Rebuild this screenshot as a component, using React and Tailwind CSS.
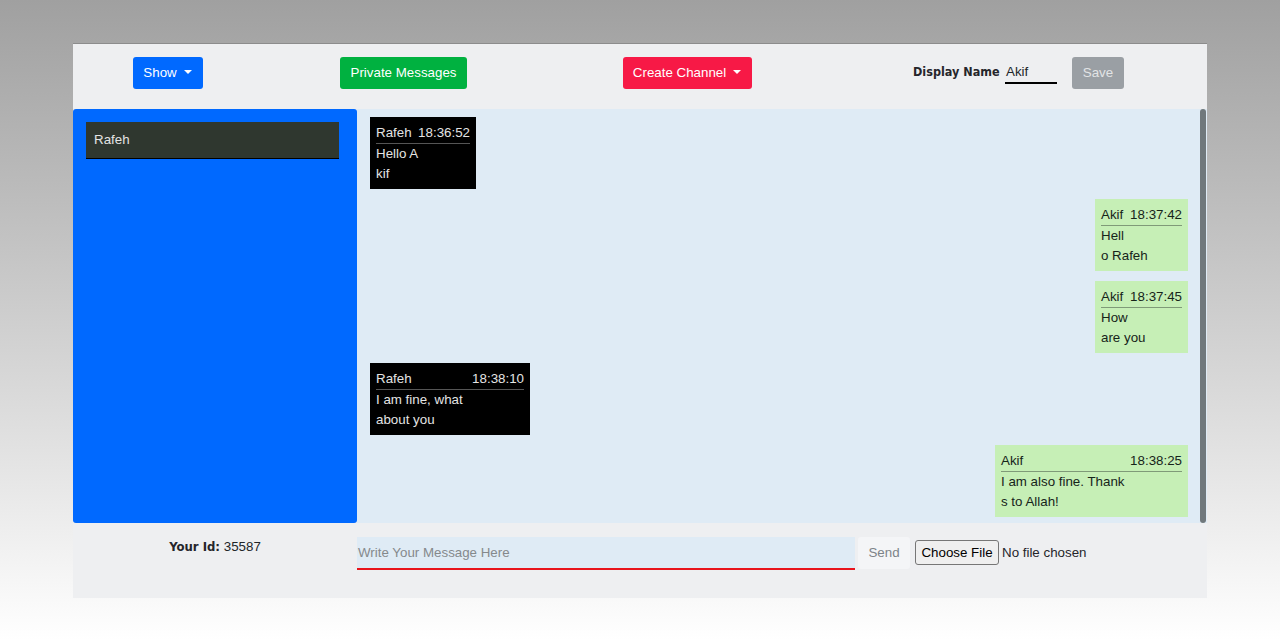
import React from 'react';

const messages = [
    { id: 1, mine: false, name: 'Rafeh', time: '18:36:52', lines: ['Hello A', 'kif'], width: 'w-[106px]' },
    { id: 2, mine: true, name: 'Akif', time: '18:37:42', lines: ['Hell', 'o Rafeh'], width: 'w-[93px]' },
    { id: 3, mine: true, name: 'Akif', time: '18:37:45', lines: ['How', 'are you'], width: 'w-[93px]' },
    { id: 4, mine: false, name: 'Rafeh', time: '18:38:10', lines: ['I am fine, what', 'about you'], width: 'w-[160px]' },
    { id: 5, mine: true, name: 'Akif', time: '18:38:25', lines: ['I am also fine. Thank', 's to Allah!'], width: 'w-[193px]' },
];

const Caret = () => (
    <span className="ml-[7px] inline-block align-[3px] border-x-[4px] border-t-[4px] border-x-transparent border-t-white" />
);

const Bubble = ({ message }) => {
    const { mine, name, time, lines, width } = message;
    return (
        <div className={`${width} h-[72px] shrink-0 px-[6px] pt-[6px] leading-[20px] ${mine ? 'self-end bg-[#c6efb6] text-[#16241a]' : 'self-start bg-black text-[#e4e4e4]'}`}>
            <div className={`flex justify-between border-b h-[21px] ${mine ? 'border-[#7f9a78]' : 'border-[#555555]'}`}>
                <span>{name}</span>
                <span>{time}</span>
            </div>
            {lines.map((line) => (
                <div key={line}>{line}</div>
            ))}
        </div>
    );
};

const App = () => {
    return (
        <div className="h-[640px] overflow-hidden pt-[43px] bg-gradient-to-b from-[#a0a0a0] to-white text-[13.33px] text-[#212529] [font-family:'Liberation_Sans',Arial,sans-serif]">
            <div className="w-[1134px] h-[555px] ml-[73px] bg-[#eeeff1] flex flex-col border-t border-t-[#8c8c8c]">
                <header className="h-[65px] shrink-0 grid grid-cols-[189px_283px_284px_378px] items-start pt-[13px]">
                    <div className="flex justify-center">
                        <button className="h-[32px] w-[70px] pb-px rounded-[3px] bg-[#0069ff] text-white">
                            Show<Caret />
                        </button>
                    </div>
                    <div className="flex justify-center">
                        <button className="h-[32px] w-[127px] pb-px rounded-[3px] bg-[#00b140] text-white">
                            Private Messages
                        </button>
                    </div>
                    <div className="flex justify-center">
                        <button className="h-[32px] w-[129px] pb-px rounded-[3px] bg-[#f71946] text-white">
                            Create Channel<Caret />
                        </button>
                    </div>
                    <div className="flex items-start pl-[84px]">
                        <label className="w-[92px] h-[32px] leading-[29px] text-[12.5px] font-bold [font-family:'DejaVu_Sans_Condensed','DejaVu_Sans',sans-serif] text-[#25252b]">
                            Display Name
                        </label>
                        <div className="w-[52px] h-[27px] border-b-2 border-black pl-[1px] leading-[29px]">Akif</div>
                        <button className="ml-[15px] h-[32px] w-[52px] pb-px rounded-[3px] bg-[#9a9fa4] text-[#e2e4e6]">
                            Save
                        </button>
                    </div>
                </header>

                <main className="h-[414px] shrink-0 flex">
                    <aside className="w-[284px] shrink-0 rounded-[3px] bg-[#0069ff] pt-[13px] pl-[13px]">
                        <div className="w-[253px] h-[37px] bg-[#2f372f] border-b border-black pl-[8px] leading-[36px] text-[#e4e4e4]">
                            Rafeh
                        </div>
                    </aside>
                    <section className="relative flex-1 bg-[#dfebf5] pl-[13px] pr-[19px] pt-[8px] flex flex-col gap-[10px]">
                        {messages.map((message) => (
                            <Bubble key={message.id} message={message} />
                        ))}
                        <div className="absolute right-[1px] top-0 h-full w-[6px] rounded-[3px] bg-[#70787c]" />
                    </section>
                </main>

                <footer className="flex-1 flex">
                    <div className="w-[284px] shrink-0 pt-[15px] text-center leading-[18px]">
                        <span className="text-[13px] font-bold [font-family:'DejaVu_Sans_Condensed','DejaVu_Sans',sans-serif] text-[#25252b]">Your Id:</span> 35587
                    </div>
                    <div className="flex items-start pt-[14px]">
                        <div className="w-[498px] h-[33px] bg-[#dfebf5] border-b-2 border-b-[#e8141c] pl-[1px] leading-[31px] text-[#85898c]">
                            Write Your Message Here
                        </div>
                        <button className="ml-[3px] h-[32px] w-[52px] rounded-[3px] bg-[#f4f5f7] text-[#7d8388]">
                            Send
                        </button>
                        <div className="ml-[5px] mt-[3px] flex items-center">
                            <button className="h-[25px] w-[84px] rounded-[3px] border border-[#767676] bg-[#efefef] text-black">
                                Choose File
                            </button>
                            <span className="ml-[3px] text-[#25252b]">No file chosen</span>
                        </div>
                    </div>
                </footer>
            </div>
        </div>
    );
};

export default App;
